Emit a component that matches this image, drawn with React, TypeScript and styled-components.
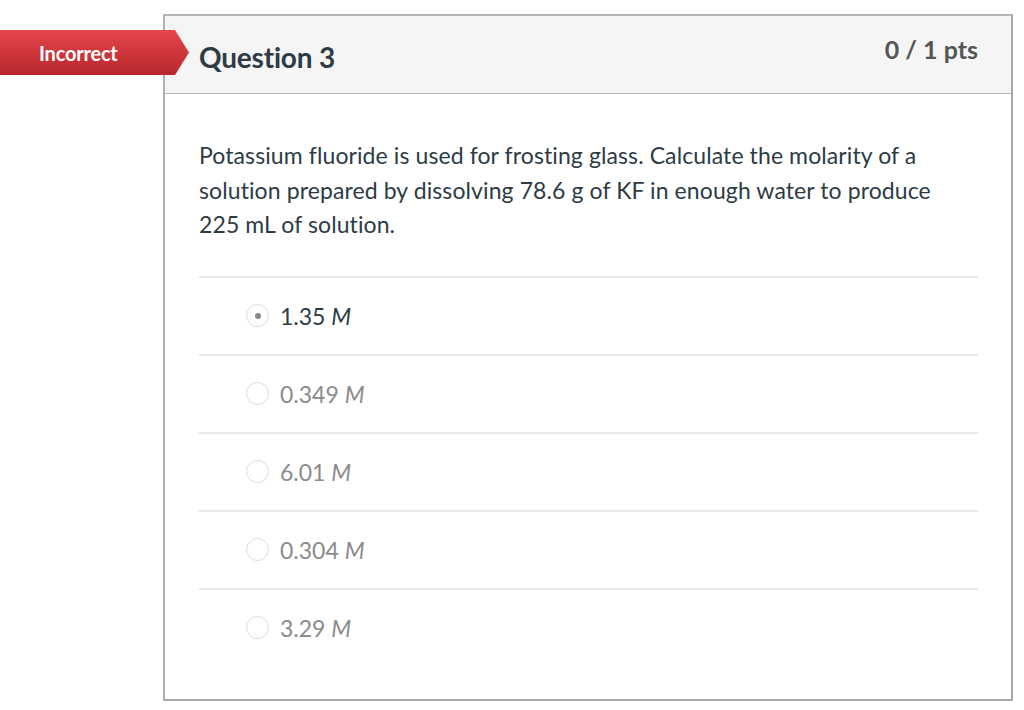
import React from "react";
import styled, { createGlobalStyle } from "styled-components";

const Global = createGlobalStyle`
  html, body { margin: 0; padding: 0; background: #fff; }
  body { font-family: Lato, "Open Sans", sans-serif; color: #2d3b45; }
`;

const Page = styled.div`
  position: relative;
  padding: 14px 11px 10px 163px;
`;

const Ribbon = styled.div`
  position: absolute;
  left: 0;
  top: 30px;
  width: 189px;
  height: 45px;
  background: linear-gradient(#e5474c, #b7262b);
  clip-path: polygon(0 0, 175px 0, 189px 50%, 175px 100%, 0 100%);
  display: flex;
  align-items: center;
  padding-left: 39px;
  box-sizing: border-box;
  color: #fff;
  font-weight: 700;
  font-size: 20px;
  letter-spacing: -0.2px;
  z-index: 2;
`;

const Card = styled.div`
  border: 2px solid #aaa;
  border-color: #b5b5b5 #a8a8a8 #a8a8a8 #b0b0b0;
  height: 687px;
  box-sizing: border-box;
`;

const Header = styled.div`
  background: #f5f5f5;
  border-bottom: 1px solid #b3b3b3;
  height: 77px;
  display: flex;
  justify-content: space-between;
  padding: 0 33px 0 34px;
`;

const Title = styled.h2`
  margin: 0;
  padding-top: 24px;
  font-size: 28px;
  font-weight: 700;
  color: #2d3b45;
  letter-spacing: -0.2px;
`;

const Points = styled.div`
  padding-top: 18px;
  font-size: 25px;
  font-weight: 700;
  color: #555;
`;

const Body = styled.div`
  padding: 44px 33px 0 34px;
`;

const QuestionText = styled.p`
  margin: 0 0 34px;
  font-size: 23px;
  letter-spacing: 0.1px;
  line-height: 34.5px;
  color: #2d3b45;
`;

const Answers = styled.div`
  border-top: 2px solid #e8e8e8;
`;

const Row = styled.div<{ $last?: boolean }>`
  height: 76px;
  display: flex;
  align-items: center;
  padding-left: 47px;
  gap: 11px;
  border-bottom: ${(p) => (p.$last ? "none" : "2px solid #e8e8e8")};
`;

const Radio = styled.span<{ $checked?: boolean }>`
  width: 23px;
  height: 23px;
  border-radius: 50%;
  border: 1px solid #dcdcdc;
  box-sizing: border-box;
  background: #fff;
  display: flex;
  align-items: center;
  justify-content: center;
  &::after {
    content: "";
    display: ${(p) => (p.$checked ? "block" : "none")};
    width: 6px;
    height: 6px;
    border-radius: 50%;
    background: #8a8a8a;
  }
`;

const AnswerLabel = styled.span<{ $selected?: boolean }>`
  font-size: 23px;
  color: ${(p) => (p.$selected ? "#2d3b45" : "#8b8b8b")};
  i { font-style: italic; }
`;

const answers = [
  { v: "1.35", sel: true },
  { v: "0.349", sel: false },
  { v: "6.01", sel: false },
  { v: "0.304", sel: false },
  { v: "3.29", sel: false },
];

export default function App() {
  return (
    <>
      <Global />
      <Page>
        <Ribbon>Incorrect</Ribbon>
        <Card>
          <Header>
            <Title>Question 3</Title>
            <Points>0 / 1 pts</Points>
          </Header>
          <Body>
            <QuestionText>
              Potassium fluoride is used for frosting glass. Calculate the molarity of a
              <br />
              solution prepared by dissolving 78.6 g of KF in enough water to produce
              <br />
              225 mL of solution.
            </QuestionText>
            <Answers>
              {answers.map((a, i) => (
                <Row key={a.v} $last={i === answers.length - 1}>
                  <Radio $checked={a.sel} />
                  <AnswerLabel $selected={a.sel}>
                    {a.v} <i>M</i>
                  </AnswerLabel>
                </Row>
              ))}
            </Answers>
          </Body>
        </Card>
      </Page>
    </>
  );
}
